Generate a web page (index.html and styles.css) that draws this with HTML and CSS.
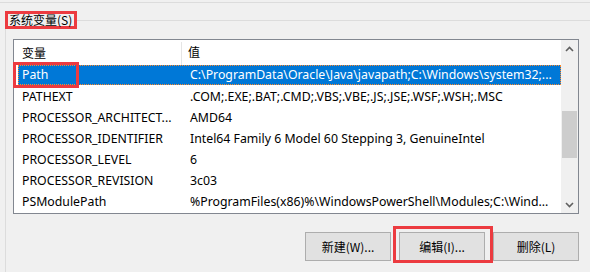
FILE: index.html
```html
<!DOCTYPE html>
<html lang="zh-CN">
<head>
<meta charset="utf-8">
<link rel="stylesheet" href="styles.css">
</head>
<body>
<div class="top-rule"></div>
<div class="group">
  <div class="group-head">
    <span class="group-label">系统变量(S)</span>
    <span class="group-line"></span>
  </div>
  <div class="group-body">
    <div class="listview">
      <div class="lv-main">
        <div class="lv-header">
          <div class="hcell hcell-name">变量</div>
          <div class="hcell hcell-value">值</div>
        </div>
        <div class="row selected">
          <div class="cell name">Path</div>
          <div class="cell value">C:\ProgramData\Oracle\Java\javapath;C:\Windows\system32;...</div>
        </div>
        <div class="row">
          <div class="cell name">PATHEXT</div>
          <div class="cell value">.COM;.EXE;.BAT;.CMD;.VBS;.VBE;.JS;.JSE;.WSF;.WSH;.MSC</div>
        </div>
        <div class="row">
          <div class="cell name">PROCESSOR_ARCHITECT...</div>
          <div class="cell value">AMD64</div>
        </div>
        <div class="row">
          <div class="cell name">PROCESSOR_IDENTIFIER</div>
          <div class="cell value">Intel64 Family 6 Model 60 Stepping 3, GenuineIntel</div>
        </div>
        <div class="row">
          <div class="cell name">PROCESSOR_LEVEL</div>
          <div class="cell value">6</div>
        </div>
        <div class="row">
          <div class="cell name">PROCESSOR_REVISION</div>
          <div class="cell value">3c03</div>
        </div>
        <div class="row">
          <div class="cell name">PSModulePath</div>
          <div class="cell value">%ProgramFiles(x86)%\WindowsPowerShell\Modules;C:\Wind...</div>
        </div>
      </div>
      <div class="scrollbar">
        <div class="sb-arrow">
          <svg width="9" height="6" viewBox="0 0 9 6"><polyline points="1,5 4.5,1.5 8,5" fill="none" stroke="#606060" stroke-width="1.6"/></svg>
        </div>
        <div class="sb-track"><div class="sb-thumb"></div></div>
        <div class="sb-arrow">
          <svg width="9" height="6" viewBox="0 0 9 6"><polyline points="1,1 4.5,4.5 8,1" fill="none" stroke="#606060" stroke-width="1.6"/></svg>
        </div>
      </div>
      <span class="mark mark-path"></span>
    </div>
    <div class="buttons">
      <button class="btn">新建(W)...</button>
      <button class="btn btn-marked">编辑(I)...<span class="mark mark-btn"></span></button>
      <button class="btn">删除(L)</button>
    </div>
  </div>
</div>
</body>
</html>
```

FILE: styles.css
```css
* { box-sizing: border-box; }
html, body { margin: 0; padding: 0; }
body {
  width: 590px;
  height: 272px;
  overflow: hidden;
  background: #f0f0f0;
  font-family: "Noto Sans", "Noto Sans CJK SC", sans-serif;
  font-size: 12.3px;
  color: #000;
}
.top-rule {
  margin-top: 2px;
  border-top: 1px solid #dcdcdc;
}
.group {
  margin-left: 5px;
  margin-top: 8px;
}
.group-head {
  display: flex;
  height: 18px;
}
.group-label {
  width: 72px;
  height: 18px;
  border: 3px solid #ec3b40;
  font-family: "Noto Sans CJK SC", sans-serif;
  font-size: 12px;
  line-height: 12px;
  padding-left: 1px;
  white-space: nowrap;
  overflow: visible;
}
.group-line {
  flex: 1;
  margin-top: 9px;
  border-top: 1px solid #dcdcdc;
  height: 0;
}
.group-body {
  border-left: 1px solid #dcdcdc;
  padding-left: 7px;
  padding-top: 10px;
  height: 250px;
}
.listview {
  position: relative;
  width: 566px;
  height: 175px;
  border: 1px solid #828790;
  background: #fff;
  display: flex;
}
.lv-main {
  flex: 1;
  overflow: hidden;
  padding-bottom: 1px;
}
.lv-header {
  display: flex;
  height: 25px;
  align-items: center;
}
.hcell {
  font-family: "Noto Sans CJK SC", sans-serif;
  font-size: 12px;
  height: 25px;
  line-height: 24px;
}
.hcell-name {
  width: 168px;
  padding-left: 8px;
  border-right: 1px solid #e5e5e5;
  height: 23px;
  margin-top: 1px;
  line-height: 22px;
}
.hcell-value {
  padding-left: 6px;
}
.row {
  display: flex;
  height: 21px;
  margin-left: 4px;
  padding-top: 1px;
  line-height: 20px;
  white-space: nowrap;
}
.row.selected {
  height: 20px;
  padding-top: 1px;
  margin-bottom: 1px;
  background: #0078d7;
  color: #fff;
  outline: 1px dotted #ff8a2a;
  outline-offset: -1px;
  line-height: 18px;
}
.cell { overflow: hidden; }
.name {
  width: 164px;
  padding-left: 4px;
}
.value {
  flex: 1;
  padding-left: 8px;
}
.scrollbar {
  width: 17px;
  background: #f0f0f0;
  display: flex;
  flex-direction: column;
}
.sb-arrow {
  height: 17px;
  display: flex;
  align-items: center;
  justify-content: center;
}
.sb-arrow svg { display: block; }
.sb-track {
  flex: 1;
  padding: 54px 1px 0 1px;
}
.sb-thumb {
  height: 47px;
  background: #cdcdcd;
}
.mark {
  position: absolute;
  border: 3px solid #ec3b40;
  pointer-events: none;
}
.mark-path {
  left: -1px;
  top: 22px;
  width: 66px;
  height: 26px;
}
.buttons {
  width: 566px;
  margin-top: 18px;
  display: flex;
  justify-content: flex-end;
  gap: 8px;
}
.btn {
  position: relative;
  width: 86px;
  height: 29px;
  margin: 0;
  padding: 0;
  background: #e1e1e1;
  border: 1px solid #adadad;
  font-family: "Noto Sans CJK SC", sans-serif;
  font-size: 12px;
  color: #000;
}
.mark-btn {
  left: -7px;
  top: -7px;
  width: 100px;
  height: 37px;
}
```
